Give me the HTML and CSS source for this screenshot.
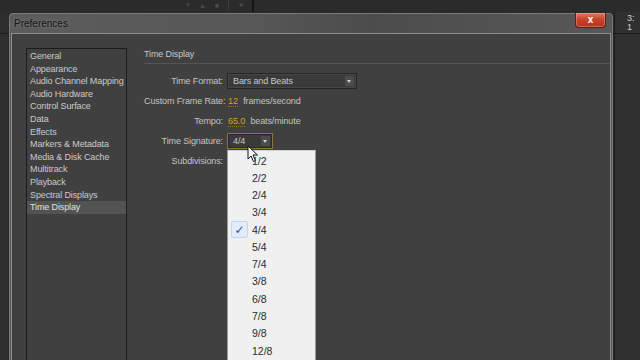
FILE: index.html
```html
<!DOCTYPE html>
<html>
<head>
  <title>Preferences</title>
  <link rel="stylesheet" href="styles.css">
</head>
<body>

  <div class="app">
    <!-- background app toolbar -->
    <div class="app-top">
      <div class="tools">
        <span class="tool">&#9662;</span>
        <span class="tool">&#9650;</span>
        <span class="tool">&#9632;</span>
        <span class="sep"></span>
        <span class="tool">&#9733;</span>
      </div>
      <span class="divider"></span>
    </div>

    <div class="app-main">
      <div class="app-left"></div>

      <!-- Preferences dialog -->
      <div class="dialog">
        <div class="titlebar">
          <span class="title">Preferences</span>
          <button class="close-btn">x</button>
        </div>

        <div class="dialog-body">
          <ul class="cat-list">
            <li>General</li>
            <li>Appearance</li>
            <li>Audio Channel Mapping</li>
            <li>Audio Hardware</li>
            <li>Control Surface</li>
            <li>Data</li>
            <li>Effects</li>
            <li>Markers &amp; Metadata</li>
            <li>Media &amp; Disk Cache</li>
            <li>Multitrack</li>
            <li>Playback</li>
            <li>Spectral Displays</li>
            <li class="selected">Time Display</li>
          </ul>

          <div class="panel">
            <div class="panel-title">Time Display</div>
            <div class="form">
              <label>Time Format:</label>
              <div class="select wide"><span>Bars and Beats</span><i class="arrow"></i></div>

              <label>Custom Frame Rate:</label>
              <div class="value"><span class="num">12</span> frames/second</div>

              <label>Tempo:</label>
              <div class="value"><span class="num">65.0</span> beats/minute</div>

              <label>Time Signature:</label>
              <div class="select small focused"><span>4/4</span><i class="arrow"></i></div>

              <label>Subdivisions:</label>
              <div class="value"></div>
            </div>
          </div>
        </div>
      </div>

      <div class="app-right">
        <div class="clock">3:<br>1</div>
      </div>
    </div>
  </div>

  <!-- open Time Signature list -->
  <ul class="popup">
    <li><span class="mark"></span>1/2</li>
    <li><span class="mark"></span>2/2</li>
    <li><span class="mark"></span>2/4</li>
    <li><span class="mark"></span>3/4</li>
    <li><span class="mark checked">&#10003;</span>4/4</li>
    <li><span class="mark"></span>5/4</li>
    <li><span class="mark"></span>7/4</li>
    <li><span class="mark"></span>3/8</li>
    <li><span class="mark"></span>6/8</li>
    <li><span class="mark"></span>7/8</li>
    <li><span class="mark"></span>9/8</li>
    <li><span class="mark"></span>12/8</li>
  </ul>

  <svg class="cursor" width="12" height="18" viewBox="0 0 12 18">
    <path d="M1 1 L1 14 L4 11 L6.5 16.5 L8.5 15.5 L6 10 L10.5 10 Z" fill="#f4f4f4" stroke="#111" stroke-width="1"/>
  </svg>

</body>
</html>
```

FILE: styles.css
```css
body {
  margin: 0;
  width: 640px;
  height: 360px;
  overflow: hidden;
  background-color: #2d2d2d;
  font-family: 'Liberation Sans', Arial, sans-serif;
  font-size: 9px;
  letter-spacing: -0.12px;
  color: #c6c6c6;
  position: relative;
}

.app {
  display: flex;
  flex-direction: column;
  height: 360px;
}

/* background application */
.app-top {
  height: 12px;
  display: flex;
  background-color: #2b2b2b;
}

.tools {
  display: flex;
  gap: 9px;
  margin-left: 186px;
  height: 10px;
  align-items: center;
  color: #4a4a4a;
  font-size: 7px;
}

.tools .sep {
  width: 1px;
  height: 10px;
  background-color: #3a3a3a;
}

.divider {
  width: 2px;
  height: 12px;
  margin-left: 8px;
  background-color: #151515;
}

.app-main {
  flex: 1;
  display: flex;
  min-height: 0;
}

.app-left {
  width: 8px;
  background-color: #2f2f2f;
  border-top: 1px solid #1d1d1d;
  margin-top: 21px;
}

.app-right {
  width: 25px;
  background-color: #303030;
  border-left: 1px solid #1a1a1a;
  position: relative;
}

.clock {
  color: #cfcfcf;
  font-size: 9px;
  line-height: 9px;
  padding: 2px 0 0 12px;
  height: 19px;
  border-bottom: 1px solid #1c1c1c;
}

/* dialog frame */
.dialog {
  flex: 1;
  display: flex;
  flex-direction: column;
  background: linear-gradient(90deg, #5c5c5c, #575757 40%, #4c4c4c 60%, #585858);
  border: 1px solid #2a2a2a;
  border-bottom: none;
  border-radius: 5px 5px 0 0;
  padding: 0 2px;
  box-shadow: inset 1px 1px 0 #7a7a7a, inset -1px 0 0 #7a7a7a;
}

.titlebar {
  height: 20px;
  display: flex;
  justify-content: space-between;
  align-items: flex-start;
}

.title {
  margin: 5px 0 0 3px;
  font-size: 10px;
  letter-spacing: 0;
  color: #151515;
  text-shadow: 0 0 4px #8a8a8a;
}

.close-btn {
  width: 31px;
  height: 15px;
  margin: 0 5px 0 0;
  padding: 0;
  border: 1px solid #5a2015;
  border-top: none;
  border-radius: 0 0 4px 4px;
  background: linear-gradient(#e07a62, #c9452c 45%, #b03420);
  color: #fff;
  font-family: 'Liberation Sans', Arial, sans-serif;
  font-weight: bold;
  font-size: 10px;
  line-height: 12px;
  box-shadow: inset 0 0 0 1px rgba(255, 200, 180, 0.35);
}

.dialog-body {
  flex: 1;
  display: flex;
  gap: 17px;
  padding: 14px 0 0 14px;
  background-color: #404040;
  border: 1px solid #8c8c8c;
  border-bottom: none;
  min-height: 0;
}

/* category list */
.cat-list {
  list-style: none;
  margin: 0;
  padding: 1px 0 0 0;
  width: 99px;
  flex-shrink: 0;
  background-color: #404040;
  border: 1px solid #1c1c1c;
  border-bottom: none;
}

.cat-list li {
  height: 12.6px;
  line-height: 12.6px;
  padding-left: 3px;
  white-space: nowrap;
  color: #cacaca;
}

.cat-list li.selected {
  background-color: #535353;
  color: #e0e0e0;
}

/* right panel */
.panel {
  flex: 1;
}

.panel-title {
  height: 12px;
  line-height: 12px;
  padding-bottom: 3px;
  border-bottom: 1px solid #555;
  color: #c8c8c8;
}

.form {
  display: grid;
  grid-template-columns: 79px auto;
  grid-auto-rows: 16px;
  row-gap: 4px;
  column-gap: 4px;
  margin-top: 9px;
  align-items: center;
}

.form label {
  text-align: right;
  white-space: nowrap;
  color: #c4c4c4;
}

.value {
  padding-left: 1px;
  color: #c4c4c4;
}

.num {
  color: #d9a01e;
  border-bottom: 1px dotted #a07818;
  margin-right: 3px;
}

.select {
  height: 14px;
  display: flex;
  align-items: center;
  justify-content: space-between;
  background-color: #3a3a3a;
  border: 1px solid #242424;
  box-shadow: inset 0 0 0 1px #474747;
  color: #c8c8c8;
  padding-left: 5px;
}

.select.wide {
  width: 123px;
}

.select.small {
  width: 39px;
}

.select.focused {
  border-color: #8a7634;
  box-shadow: inset 0 0 0 1px #2a2a2a;
}

.arrow {
  width: 9px;
  height: 10px;
  margin-right: 2px;
  background-color: #4c4c4c;
  position: relative;
}

.arrow:before {
  content: "";
  position: absolute;
  left: 2px;
  top: 4px;
  border-left: 2.5px solid transparent;
  border-right: 2.5px solid transparent;
  border-top: 3px solid #cfcfcf;
}

/* open dropdown list */
.popup {
  position: absolute;
  left: 227px;
  top: 150px;
  width: 87px;
  height: 215px;
  margin: 0;
  padding: 1px 0 0 0;
  list-style: none;
  background-color: #f0f0f0;
  border: 1px solid #9a9a9a;
  border-top-color: #d0d0d0;
  font-size: 10.5px;
  letter-spacing: 0;
  color: #2c2c2c;
}

.popup li {
  height: 17.27px;
  display: flex;
  align-items: center;
}

.mark {
  width: 15px;
  height: 17px;
  margin: 0 6px 0 3px;
  flex-shrink: 0;
  display: flex;
  align-items: center;
  justify-content: center;
}

.mark.checked {
  box-sizing: border-box;
  width: 17px;
  margin-right: 4px;
  background-color: #e3ecf8;
  border: 1px solid #c4d5ec;
  border-radius: 2px;
  color: #2b4f9c;
  font-family: 'DejaVu Sans', sans-serif;
  font-size: 12px;
  font-weight: bold;
}

.cursor {
  position: absolute;
  left: 247px;
  top: 145px;
}
```
